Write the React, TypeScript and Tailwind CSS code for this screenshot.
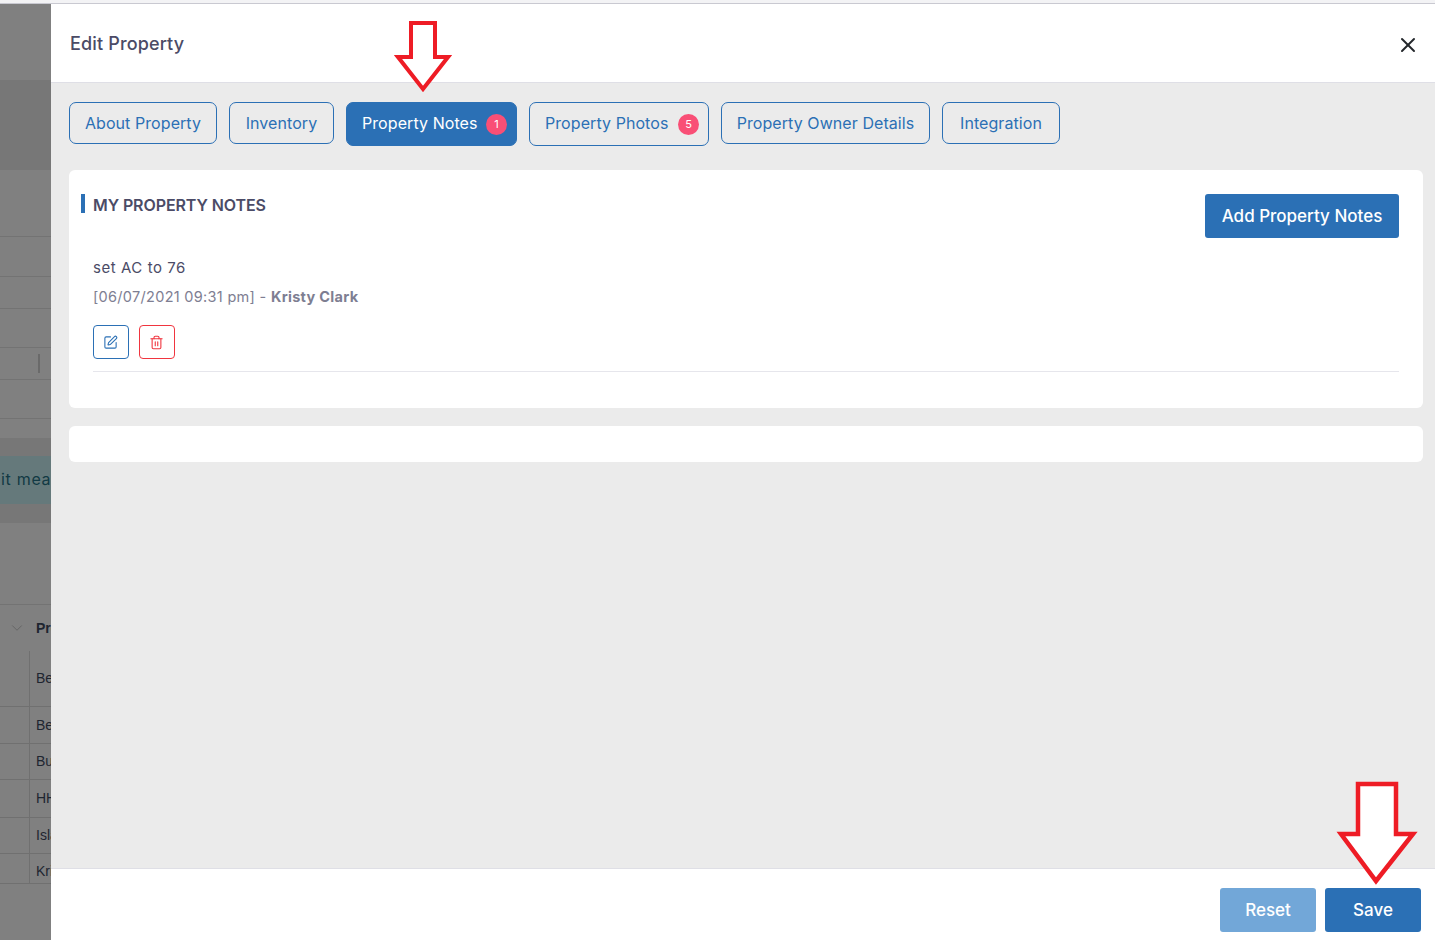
import { X, SquarePen, Trash2, ChevronDown } from "lucide-react";

const tableRows = [
  { text: "Bedroom", height: "h-[56px]", pad: "" },
  { text: "Bedroom", height: "h-[37px]", pad: "" },
  { text: "Bunk", height: "h-[36px]", pad: "" },
  { text: "HHH", height: "h-[38px]", pad: "" },
  { text: "Island", height: "h-[36px]", pad: "" },
  { text: "Kristy", height: "h-[30px]", pad: "pt-[6px]" },
];

const Backdrop = () => {
  return (
    <div className="w-[51px] shrink-0 overflow-hidden bg-[#808080] font-[Inter,sans-serif] whitespace-nowrap">
      <div className="h-[76px]" />
      <div className="h-[90px] bg-[#777777]" />
      {/* faint list rows */}
      <div className="h-[67px] border-b border-[#737373]" />
      <div className="h-[40px] border-b border-[#737373]" />
      <div className="h-[32px] border-b border-[#737373]" />
      <div className="h-[39px] border-b border-[#737373]" />
      <div className="h-[32px] border-b border-[#737373] flex items-center justify-end pr-[11px]">
        <div className="w-[2px] h-[19px] bg-[#6a6a6a]" />
      </div>
      <div className="h-[39px] border-b border-[#737373]" />
      <div className="h-[19px]" />
      <div className="h-[18px] bg-[#777777]" />
      <div className="h-[48px] bg-[#65797b] flex items-center pl-[1px] pb-[2px] text-[16px] text-[#123a44] tracking-[0.7px]">
        it meant
      </div>
      <div className="h-[19px] bg-[#777777]" />
      <div className="h-[82px] border-b border-[#737373]" />
      {/* table */}
      <div className="h-[46px] flex items-center font-['Liberation_Sans',sans-serif] text-[14px] font-bold text-[#1e2530]">
        <ChevronDown className="ml-[8px] mr-[10px] w-[18px] h-[18px] shrink-0 text-[#5c5c5c]" strokeWidth={1} />
        Property
      </div>
      {tableRows.map((row, i) => (
        <div key={i} className={`${row.height} flex border-b border-[#707070] font-['Liberation_Sans',sans-serif] text-[14px] text-[#1e2530]`}>
          <div className="w-[30px] shrink-0 border-r border-[#707070]" />
          <div className={`pl-[6px] flex items-center ${row.pad}`}>{row.text}</div>
        </div>
      ))}
    </div>
  );
};

const tabs = [
  { label: "About Property", width: "w-[148px]" },
  { label: "Inventory", width: "w-[105px]" },
  { label: "Property Notes", width: "w-[171px]", count: 1, active: true },
  { label: "Property Photos", width: "w-[180px]", count: 5 },
  { label: "Property Owner Details", width: "w-[209px]" },
  { label: "Integration", width: "w-[118px]" },
];

const App = () => {
  return (
    <div className="relative h-[940px] w-[1435px] overflow-hidden bg-white font-[Inter,sans-serif]">
      <div className="h-[4px] border-b border-[#c9c9d1] bg-[#f3f3f5]" />
      <div className="flex h-[936px]">
        <Backdrop />

        <div className="flex flex-1 flex-col bg-white rounded-tl-[4px]">
          {/* Header */}
          <div className="flex h-[79px] shrink-0 items-center justify-between border-b border-[#dfdfe6] pl-[19px] pr-[15px]">
            <h2 className="text-[18px] font-medium text-[#4b4b66] tracking-[0.15px]">Edit Property</h2>
            <X className="w-[24px] h-[24px] text-[#23272b] mt-[3px]" strokeWidth={2} />
          </div>

          {/* Body */}
          <div className="flex flex-1 flex-col bg-[#ebebeb] pl-[18px] pr-[12px] pt-[19px]">
            <div className="flex items-start gap-[12px]">
              {tabs.map((tab) => (
                <button
                  key={tab.label}
                  className={`flex items-center rounded-[7px] border border-[#2b70b5] text-[16px] tracking-[0.07px] ${tab.width} ${
                    tab.active ? "bg-[#2b70b5] text-white" : "text-[#2b70b5]"
                  } ${tab.count ? "h-[44px] pl-[15px] pr-[9px]" : "h-[42px] justify-center"}`}
                >
                  <span className={tab.count ? "pb-[2px]" : ""}>{tab.label}</span>
                  {tab.count && (
                    <span className="ml-auto flex h-[21px] w-[21px] items-center justify-center rounded-full bg-[#f94f76] text-[11px] text-white tracking-normal">
                      {tab.count}
                    </span>
                  )}
                </button>
              ))}
            </div>

            {/* Notes card */}
            <div className="mt-[24px] h-[238px] rounded-[6px] bg-white pl-[12px] pr-[24px] pt-[24px]">
              <div className="flex items-start justify-between">
                <h3 className="h-[19px] border-l-[4px] border-[#2b70b5] pl-[8px] text-[16px] leading-[22px] font-semibold text-[#4b4b66] tracking-[-0.1px]">
                  MY PROPERTY NOTES
                </h3>
                <button className="h-[44px] w-[194px] rounded-[3px] bg-[#2b70b5] pt-[2px] text-[17px] font-medium text-white">
                  Add Property Notes
                </button>
              </div>

              <div className="ml-[12px] border-b border-[#e6e6ec] pb-[12px]">
                <p className="mt-[19px] text-[15px] leading-[22px] text-[#4b4b66] tracking-[0.55px]">set AC to 76</p>
                <p className="mt-[7px] text-[14.5px] leading-[22px] text-[#7e7e92] tracking-[0.3px]">
                  [06/07/2021 09:31 pm] - <span className="font-bold">Kristy Clark</span>
                </p>
                <div className="mt-[17px] flex gap-[10px]">
                  <button className="flex h-[34px] w-[36px] items-center justify-center rounded-[4px] border border-[#2b70b5] bg-white pr-[2px]">
                    <SquarePen className="w-[15px] h-[15px] text-[#2b70b5]" strokeWidth={1.75} />
                  </button>
                  <button className="flex h-[34px] w-[36px] items-center justify-center rounded-[4px] border border-[#f0353f] bg-white pr-[2px]">
                    <Trash2 className="w-[15px] h-[15px] text-[#f0353f]" strokeWidth={1.75} />
                  </button>
                </div>
              </div>
            </div>

            <div className="mt-[18px] h-[36px] rounded-[6px] bg-white" />
          </div>

          {/* Footer */}
          <div className="flex h-[72px] shrink-0 items-start justify-end gap-[9px] border-t border-[#dfdfe6] pr-[14px] pt-[19px]">
            <button className="h-[44px] w-[96px] rounded-[3px] bg-[#72a7d8] pt-[2px] text-[17px] font-medium text-white">Reset</button>
            <button className="h-[44px] w-[96px] rounded-[3px] bg-[#2b70b5] pt-[2px] text-[17px] font-medium text-white">Save</button>
          </div>
        </div>
      </div>

      {/* Annotation arrows */}
      <svg className="absolute left-[394px] top-[20px]" width="58" height="73" viewBox="0 0 58 73" fill="none">
        <path d="M17 3H41V37H54L29 69L4 37H17Z" stroke="#ee1c25" strokeWidth="4" fill="white" />
      </svg>
      <svg className="absolute left-[1335px] top-[781px]" width="84" height="105" viewBox="0 0 84 105" fill="none">
        <path d="M23 3H61V53H78L41 100L6 53H23Z" stroke="#ee1c25" strokeWidth="4.5" fill="white" />
      </svg>
    </div>
  );
};

export default App;
